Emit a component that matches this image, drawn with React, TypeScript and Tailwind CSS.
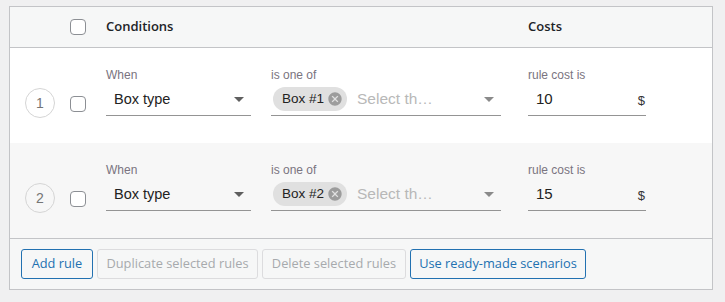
import React from "react";

const wp = { fontFamily: '"Open Sans", "Noto Sans", sans-serif' };
const mui = { fontFamily: '"Liberation Sans", Arial, sans-serif' };

function Checkbox() {
  return <div className="w-[16px] h-[16px] shrink-0 rounded-[4px] border border-[#8c8f94] bg-white" />;
}

function Arrow({ light }: { light?: boolean }) {
  return (
    <svg width="10" height="5" viewBox="0 0 10 5" className="shrink-0">
      <path d="M0 0l5 5 5-5z" fill={light ? "#8a8a8a" : "#5f5f5f"} />
    </svg>
  );
}

function CancelIcon() {
  return (
    <svg width="16" height="16" viewBox="0 0 24 24" className="shrink-0">
      <path
        d="M12 2C6.47 2 2 6.47 2 12s4.47 10 10 10 10-4.47 10-10S17.53 2 12 2zm5 13.59L15.59 17 12 13.41 8.41 17 7 15.59 10.59 12 7 8.41 8.41 7 12 10.59 15.59 7 17 8.41 13.41 12 17 15.59z"
        fill="rgba(0,0,0,0.3)"
      />
    </svg>
  );
}

function Row({ n, box, cost, bg }: { n: number; box: string; cost: string; bg: string }) {
  return (
    <div className={`h-[95px] flex items-start pt-[20px] ${bg}`} style={mui}>
      <div className="ml-[15px] mt-[20px] w-[30px] h-[30px] rounded-full border border-[#d5d5d5] flex items-center justify-center text-[14px] text-[#757575]">
        {n}
      </div>
      <div className="ml-[15px] mt-[28px]">
        <Checkbox />
      </div>
      {/* When */}
      <div className="ml-[20px] w-[145px]">
        <div className="h-[15px] text-[12px] leading-[15px] text-[#7a7480]">When</div>
        <div className="h-[33px] border-b border-[#949494] flex items-center pt-[1px] pl-[8px] pr-[7px]">
          <span className="flex-1 text-[14.5px] text-[#222]">Box type</span>
          <Arrow />
        </div>
      </div>
      {/* is one of */}
      <div className="ml-[20px] w-[230px]">
        <div className="h-[15px] text-[12px] leading-[15px] text-[#7a7480]">is one of</div>
        <div className="h-[33px] border-b border-[#949494] flex items-center pl-[2px] pr-[7px]">
          <div className="h-[24px] rounded-full bg-[#e0e0e0] flex items-center pl-[9px] pr-[4px] gap-[3px]">
            <span className="text-[13.5px] text-[#222]">{box}</span>
            <CancelIcon />
          </div>
          <span className="ml-[10px] flex-1 text-[15.5px] text-[#b8b8b8]">Select th…</span>
          <Arrow light />
        </div>
      </div>
      {/* cost */}
      <div className="ml-[27px] w-[118px]">
        <div className="h-[15px] text-[12px] leading-[15px] text-[#7a7480]">rule cost is</div>
        <div className="h-[33px] border-b border-[#949494] flex items-center pl-[8px]">
          <span className="flex-1 text-[15px] text-[#222]">{cost}</span>
          <span className="text-[13px] text-[#333] mt-[4px] pr-[1px]">$</span>
        </div>
      </div>
    </div>
  );
}

function Btn({ children, w, primary }: { children: React.ReactNode; w: string; primary?: boolean }) {
  return (
    <div
      className={`${w} h-[30px] rounded-[3px] border bg-[#f6f7f7] flex items-center justify-center text-[12.8px] ${
        primary ? "border-[#2271b1] text-[#2271b1]" : "border-[#dcdcde] text-[#a7aaad]"
      }`}
      style={wp}
    >
      {children}
    </div>
  );
}

export default function App() {
  return (
    <div className="w-[725px] h-[302px] bg-[#f0f0f1] pt-[6px] pl-[9px]">
      <div className="w-[704px] border border-[#c3c4c7] bg-white">
        <div className="h-[41px] border-b border-[#c3c4c7] bg-[#f6f7f7] flex items-center" style={wp}>
          <div className="ml-[60px]">
            <Checkbox />
          </div>
          <div className="ml-[20px] w-[422px] text-[13px] font-semibold text-[#1d2327]">Conditions</div>
          <div className="text-[13px] font-semibold text-[#1d2327]">Costs</div>
        </div>
        <Row n={1} box="Box #1" cost="10" bg="bg-white" />
        <Row n={2} box="Box #2" cost="15" bg="bg-[#f7f7f7]" />
        <div className="h-[51px] border-t border-[#c3c4c7] bg-[#f6f7f7] flex items-start pt-[10px] pl-[11px] gap-[4px]">
          <Btn w="w-[72px]" primary>Add rule</Btn>
          <Btn w="w-[161px]">Duplicate selected rules</Btn>
          <Btn w="w-[144px]">Delete selected rules</Btn>
          <Btn w="w-[176px]" primary>Use ready-made scenarios</Btn>
        </div>
      </div>
    </div>
  );
}
